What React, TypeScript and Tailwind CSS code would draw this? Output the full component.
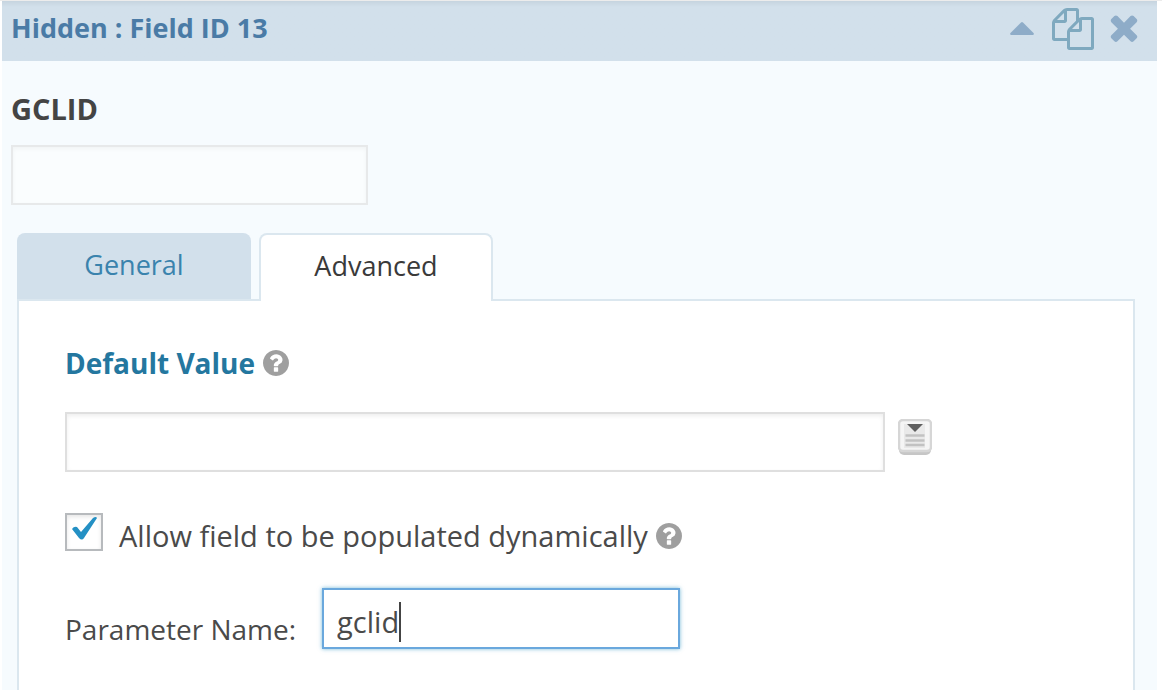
import React, { useState } from 'react'

// Font Awesome 4 glyphs, drawn on a 1792 grid
const FILES_PATH =
  'M1696 384q40 0 68 28t28 68v1216q0 40-28 68t-68 28h-960q-40 0-68-28t-28-68v-288h-544q-40 0-68-28t-28-68v-672q0-40 20-88t48-76l408-408q28-28 76-48t88-20h416q40 0 68 28t28 68v328q68-40 128-40h416zm-544 213l-299 299h299v-299zm-640-384l-299 299h299v-299zm196 647l316-316v-416h-384v416q0 40-28 68t-68 28h-416v640h512v-256q0-40 20-88t48-76zm956 804v-1152h-384v416q0 40-28 68t-68 28h-416v640h896z'
const TIMES_PATH =
  'M1490 1322q0 40-28 68l-136 136q-28 28-68 28t-68-28l-294-294-294 294q-28 28-68 28t-68-28l-136-136q-28-28-28-68t28-68l294-294-294-294q-28-28-28-68t28-68l136-136q28-28 68-28t68 28l294 294 294-294q28-28 68-28t68 28l136 136q28 28 28 68t-28 68l-294 294 294 294q28 28 28 68z'
const QUESTION_PATH =
  'M1024 1376v-192q0-14-9-23t-23-9h-192q-14 0-23 9t-9 23v192q0 14 9 23t23 9h192q14 0 23-9t9-23zm256-672q0-88-55.5-163t-138.5-116-170-41q-243 0-371 213-15 24 8 42l132 100q7 6 19 6 16 0 25-12 53-68 86-92 34-24 86-24 48 0 85.5 26t37.5 59q0 38-20 61t-68 45q-63 28-115.5 86.5t-52.5 125.5v36q0 14 9 23t23 9h192q14 0 23-9t9-23q0-19 21.5-49.5t54.5-49.5q32-18 49-28.5t46-35 44.5-48 28-60.5 12.5-81zm384 192q0 209-103 385.5t-279.5 279.5-385.5 103-385.5-103-279.5-279.5-103-385.5 103-385.5 279.5-279.5 385.5-103 385.5 103 279.5 279.5 103 385.5z'

function HelpButton({ label }: { label: string }) {
  return (
    <button type="button" aria-label={label} className="text-[#9f9f9f]">
      <svg viewBox="128 128 1536 1536" className="size-[26px]" fill="currentColor">
        <path d={QUESTION_PATH} />
      </svg>
    </button>
  )
}

function MergeTagIcon() {
  return (
    <svg viewBox="0 0 34 36" className="h-9 w-[34px]">
      <rect x="1" y="4" width="32" height="32" rx="5" fill="#c6c6c6" />
      <rect x="1" y="1" width="32" height="31" rx="4" fill="#f5f5f5" stroke="#d6d6d6" strokeWidth="2.5" />
      <rect x="6" y="5" width="21" height="24" fill="#e9e9e9" />
      <path d="M9 5h16l-8 8z" fill="#5e5e5e" />
      <path d="M7.500 16.500h19M7.500 21.500h19M7.500 26h19" stroke="#c2c2c2" strokeWidth="2.500" />
    </svg>
  )
}

export default function FieldEditor() {
  const [tab, setTab] = useState('advanced')
  const [dynamic, setDynamic] = useState(true)
  const [param, setParam] = useState('gclid')

  const tabClass = (name: string) =>
    name === tab
      ? 'h-[68px] w-[234px] rounded-t-lg border-2 border-b-0 border-[#dbe7ef] bg-white pb-1 text-[#3a3a3a]'
      : 'h-[68px] w-[234px] rounded-t-lg border-b-2 border-[#dbe7ef] bg-[#d2e0eb] pb-0.5 text-[#3a83ad]'

  return (
    <div className="flex min-h-screen flex-col border-t border-[#ececec] bg-white pr-[5px] pl-0.5 font-['Open_Sans','Noto_Sans',sans-serif] text-[28px] leading-9 text-[#4a4a4a]">
      <header className="flex h-[60px] items-center justify-between bg-[#d2e0eb] bg-linear-to-b from-[#c6d4df] to-[#d2e0eb] to-10% pr-[19px] pb-1.5 pl-[9px]">
        <h1 className="text-[27px] font-bold text-[#4a7ba6]">Hidden : Field ID 13</h1>
        <div className="flex items-center text-[#8eacc8]">
          <button type="button" aria-label="Collapse">
            <svg viewBox="0 0 24 13" className="h-[13px] w-6" fill="currentColor">
              <path d="M1 13q-1.500-.5-.5-2L11 .5q1-1 2 0L23.500 11q1 1.500-.5 2z" />
            </svg>
          </button>
          <button type="button" aria-label="Duplicate" className="mt-0.5 ml-[18px] text-[#7fa9bf]">
            <svg viewBox="0 0 1792 1792" className="size-[42px]" fill="currentColor">
              <path d={FILES_PATH} />
            </svg>
          </button>
          <button type="button" aria-label="Delete" className="ml-4">
            <svg viewBox="302 302 1188 1252" className="size-7" fill="currentColor">
              <path d={TIMES_PATH} />
            </svg>
          </button>
        </div>
      </header>

      <main className="flex flex-1 flex-col bg-[#f6fbfe] pt-[30px]">
        <label htmlFor="preview" className="pl-[9px] text-[29px] font-bold text-[#444]">GCLID</label>
        <input
          id="preview"
          type="text"
          disabled
          className="mt-[18px] ml-[9px] h-[60px] w-[357px] border-2 border-[#e7e9ea] bg-[#fafdfe] px-3 shadow-[inset_0_2px_4px_rgba(0,0,0,0.04)]"
        />

        <div role="tablist" className="relative mt-7 ml-[15px] flex gap-2 text-[27px]">
          <button type="button" role="tab" aria-selected={tab === 'general'} className={tabClass('general')} onClick={() => setTab('general')}>
            General
          </button>
          <button type="button" role="tab" aria-selected={tab === 'advanced'} className={tabClass('advanced')} onClick={() => setTab('advanced')}>
            Advanced
          </button>
        </div>

        <section role="tabpanel" className="-mt-0.5 mr-[22px] ml-[15px] flex-1 border-x-2 border-t-2 border-[#dbe7ef] bg-white pt-11 pl-[46px]">
          <div className="flex items-center gap-2">
            <label htmlFor="default-value" className="font-bold text-[#24779f]">Default Value</label>
            <HelpButton label="Default value help" />
          </div>

          <div className="mt-[31px] flex items-start gap-[13px] pr-[201px]">
            <input
              id="default-value"
              type="text"
              className="h-[60px] min-w-0 flex-1 border-2 border-[#dfdfdf] bg-white px-3 shadow-[inset_0_2px_4px_rgba(0,0,0,0.07)]"
            />
            <button type="button" aria-label="Insert merge tag" className="mt-[7px]">
              <MergeTagIcon />
            </button>
          </div>

          <div className="mt-[38px] flex items-center">
            <span className="grid">
              <input
                id="dynamic"
                type="checkbox"
                checked={dynamic}
                onChange={(e) => setDynamic(e.target.checked)}
                className="col-start-1 row-start-1 size-[38px] appearance-none border-2 border-[#b7babd] bg-white shadow-[inset_0_2px_4px_rgba(0,0,0,0.1)]"
              />
              {dynamic && (
                <svg viewBox="0 0 38 38" className="pointer-events-none col-start-1 row-start-1 size-[38px]" fill="#2490c4">
                  <path d="M7 16q2-3 5-2l4 5L28 5q3-2 4 0L19 25q-2 3-5 0z" />
                </svg>
              )}
            </span>
            <label htmlFor="dynamic" className="mt-2 ml-4 text-[29px]">Allow field to be populated dynamically</label>
            <span className="mt-2 ml-2 flex">
              <HelpButton label="Dynamic population help" />
            </span>
          </div>

          <div className="mt-[34px] flex items-center">
            <label htmlFor="param" className="mt-5">Parameter Name:</label>
            <div className="ml-[26px] flex h-[61px] w-[358px] items-center border-2 border-[#6aa8dd] bg-white pt-1.5 pl-[13px] text-[29px] shadow-[0_0_4px_rgba(30,140,190,0.6)]">
              <input
                id="param"
                type="text"
                value={param}
                onChange={(e) => setParam(e.target.value)}
                className="field-sizing-content caret-transparent outline-none"
              />
              <span className="h-10 w-0.5 bg-[#444]" />
            </div>
          </div>
        </section>
      </main>
    </div>
  )
}
